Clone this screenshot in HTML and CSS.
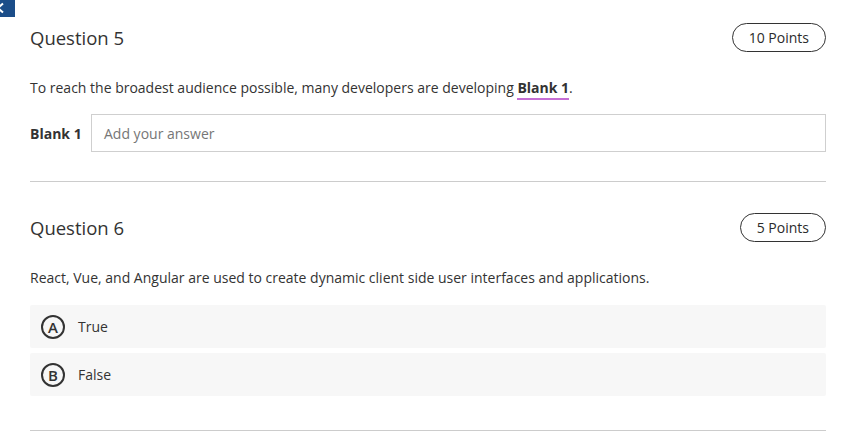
FILE: index.html
```html
<!DOCTYPE html>
<html>
<head>
<meta charset="utf-8">
<link rel="stylesheet" href="styles.css">
</head>
<body>
<div class="back"><svg width="15" height="17" viewBox="0 0 15 17"><path d="M3 3.5 L-2 8 L3 12.5" fill="none" stroke="#fff" stroke-width="2"/></svg></div>
<main class="page">
  <section class="question">
    <div class="q-head">
      <h2 class="q-title">Question 5</h2>
      <span class="points">10 Points</span>
    </div>
    <p class="q-text">To reach the broadest audience possible, many developers are developing <strong class="blank">Blank 1</strong>.</p>
    <div class="blank-row">
      <label class="blank-label">Blank 1</label>
      <div class="input">Add your answer</div>
    </div>
  </section>
  <section class="question">
    <div class="q-head">
      <h2 class="q-title">Question 6</h2>
      <span class="points">5 Points</span>
    </div>
    <p class="q-text">React, Vue, and Angular are used to create dynamic client side user interfaces and applications.</p>
    <div class="options">
      <div class="option"><span class="letter">A</span><span class="opt-text">True</span></div>
      <div class="option"><span class="letter">B</span><span class="opt-text">False</span></div>
    </div>
  </section>
</main>
</body>
</html>
```
FILE: styles.css
```css
html, body {
  margin: 0;
  padding: 0;
  background: #fff;
  font-family: "Open Sans", "Noto Sans", sans-serif;
  color: #333;
}
.back {
  position: absolute;
  left: 0;
  top: 0;
  width: 15px;
  height: 17px;
  background: #1b4d89;
}
.back svg { display: block; }
.page {
  padding: 0 27px 0 30px;
}
.question {
  border-bottom: 1px solid #cccccc;
}
.question:first-child {
  padding-top: 23px;
  padding-bottom: 29px;
}
.question:nth-child(2) {
  padding-top: 31px;
  padding-bottom: 34px;
}
.q-head {
  display: flex;
  justify-content: space-between;
  align-items: center;
  height: 29px;
}
.q-title {
  margin: 0;
  font-size: 18.5px;
  font-weight: 400;
  color: #333;
  line-height: 29px;
}
.points {
  display: inline-flex;
  align-items: center;
  height: 27px;
  padding: 0 16px;
  border: 1px solid #333;
  border-radius: 15px;
  font-size: 14px;
  font-weight: 500;
  color: #2b2b2b;
}
.q-text {
  margin: 26px 0 0;
  font-size: 14px;
  line-height: 20px;
  color: #333;
}
.blank {
  font-weight: 700;
  border-bottom: 2px solid #c56ed4;
  padding-bottom: 1px;
}
.blank-row {
  display: flex;
  align-items: center;
  margin-top: 16px;
}
.blank-label {
  font-size: 14px;
  font-weight: 700;
  width: 61px;
  color: #333;
}
.input {
  flex: 1;
  height: 36px;
  border: 1px solid #cfcfcf;
  display: flex;
  align-items: center;
  padding-left: 12px;
  font-size: 14px;
  color: #767676;
}
.options {
  display: flex;
  flex-direction: column;
  gap: 5px;
  margin-top: 17px;
}
.option {
  display: flex;
  align-items: center;
  height: 43px;
  background: #f7f7f7;
  border-radius: 2px;
  padding-left: 11px;
}
.letter {
  width: 20px;
  height: 20px;
  border: 2px solid #333;
  border-radius: 50%;
  display: flex;
  align-items: center;
  justify-content: center;
  font-size: 15px;
  font-weight: 600;
  color: #333;
}
.opt-text {
  margin-left: 13px;
  font-size: 14px;
  color: #333;
}
```
